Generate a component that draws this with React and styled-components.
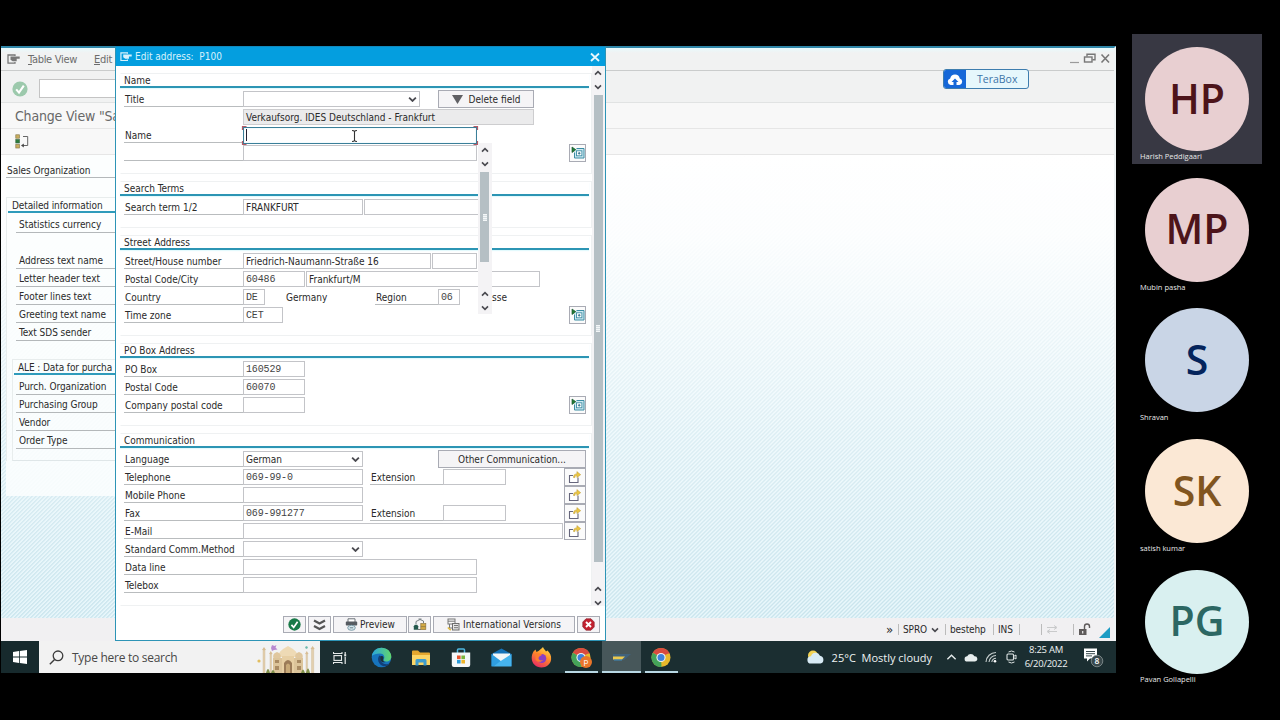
import React from "react";
import styled, { createGlobalStyle, css } from "styled-components";

const GlobalStyle = createGlobalStyle`
  * { box-sizing: border-box; }
  body {
    margin: 0;
    background: #000;
    overflow: hidden;
    font-family: "DejaVu Sans Condensed", "DejaVu Sans", Tahoma, sans-serif;
    font-stretch: condensed;
    font-size: 10px;
    color: #2a2a2a;
  }
  svg { display: block; flex: none; }
`;

/* ---------- icons ---------- */

const Chevron = ({ up, size = 8, color = "#4a4a50", w = 1.6 }) => (
  <svg width={size} height={size * 0.75} viewBox="0 0 8 6">
    <path d={up ? "M1 4.6 L4 1.6 L7 4.6" : "M1 1.4 L4 4.4 L7 1.4"} fill="none" stroke={color} strokeWidth={w} />
  </svg>
);

const HandIcon = ({ color, size = 13 }) => (
  <svg width={size} height={size * 0.77} viewBox="0 0 13 10">
    <path d="M8 8v1.2h-7v-8.2h7v1" fill="none" stroke={color} strokeWidth="1.3" />
    <path d="M3.5 2.6h9.2v2.2h-3v2.4h-4l-2.2-1.4z" fill={color} />
  </svg>
);

const CheckIcon = ({ size, color }) => (
  <svg width={size} height={size} viewBox="0 0 16 16">
    <circle cx="8" cy="8" r="7.6" fill={color} />
    <path d="M4.2 8.4l2.8 3.2 4.8-7" fill="none" stroke="#fff" strokeWidth="2.1" />
  </svg>
);

const MoreIcon = () => (
  <svg width="14" height="14" viewBox="0 0 14 14">
    <path d="M1 1v5.5l4-2.7z" fill="#1f7a34" stroke="#1f5a34" strokeWidth=".7" />
    <path d="M5.5 2.5h7.5v9.5h-9.5v-5.5" fill="#cfeaf2" stroke="#3b8da4" />
    <rect x="5.5" y="4.8" width="5.4" height="5" fill="#fff" stroke="#3b8da4" strokeWidth=".9" />
    <path d="M8.2 6v2.6M6.9 7.3h2.6" stroke="#2b6d84" strokeWidth=".9" />
  </svg>
);

const ArrowPageIcon = () => (
  <svg width="14" height="14" viewBox="0 0 14 14">
    <path d="M5 5.5h-3.5v7h8.500v-5" fill="#fff" stroke="#66667c" strokeWidth="1.1" />
    <path d="M5.5 7.500c0-2.600 1.200-3.600 3.400-3.600v-2.300l3.800 3.100-3.800 2.900v-2c-1.400 0-2 .5-2 2z" fill="#ecc63e" stroke="#b99732" strokeWidth=".5" />
  </svg>
);

const PrinterIcon = () => (
  <svg width="13" height="13" viewBox="0 0 13 13">
    <path d="M3 4v-3.2h7v3.2" fill="#fff" stroke="#6c7378" />
    <rect x=".8" y="3.6" width="11.4" height="4" rx=".8" fill="#565b61" />
    <ellipse cx="6.5" cy="9.8" rx="3.8" ry="2.5" fill="#d8e6ec" stroke="#7295a3" strokeWidth=".9" />
    <path d="M4.8 9.8h3.4" stroke="#65818c" />
  </svg>
);

const ScaleIcon = () => (
  <svg width="14" height="13" viewBox="0 0 14 13">
    <path d="M3 6v-2.5l4-2 3.5 1.5v2M5.5 1h3" fill="none" stroke="#6b7478" strokeWidth=".9" />
    <path d="M.8 11.8v-3.5l1-1.5h2.4l1 1.5v3.5z" fill="#24584d" />
    <path d="M5 11.5h3" fill="none" stroke="#777" />
    <rect x="7.8" y="5.6" width="5" height="6" fill="#d2a945" stroke="#8d7540" strokeWidth=".7" />
    <path d="M7.8 8.6h5" stroke="#8d7540" strokeWidth=".7" />
  </svg>
);

const VersionsIcon = () => (
  <svg width="13" height="13" viewBox="0 0 13 13">
    <rect x="1" y="1" width="7" height="5" fill="#f7f7f7" stroke="#777" />
    <path d="M1 3.2h7M2.5 6v4h3" fill="none" stroke="#777" />
    <rect x="5.5" y="5.5" width="6.5" height="6.5" fill="#e4e4e4" stroke="#6e6e6e" />
    <path d="M7 7.5h4M7 9.7h4" stroke="#777" />
    <path d="M.8 9.5l3 2.6" stroke="#dfb73b" strokeWidth="1.5" />
  </svg>
);

const CancelIcon = () => (
  <svg width="13" height="13" viewBox="0 0 13 13">
    <path d="M4 .8h5l3.2 3.2v5l-3.2 3.2h-5l-3.2-3.2v-5z" fill="#c2212f" stroke="#8e2530" strokeWidth=".7" />
    <path d="M4 4l5 5M9 4l-5 5" stroke="#fff" strokeWidth="1.9" />
  </svg>
);

const TableIcon = () => (
  <svg width="14" height="15" viewBox="0 0 14 15">
    <rect x=".8" y=".8" width="3.6" height="3.4" fill="#c9ae5d" stroke="#8c7c4c" strokeWidth=".7" />
    <rect x=".8" y="5.6" width="3.6" height="3.4" fill="#2c7c3b" stroke="#3b6b46" strokeWidth=".7" />
    <rect x=".8" y="10.6" width="3.6" height="3.4" fill="#c9ae5d" stroke="#8c7c4c" strokeWidth=".7" />
    <path d="M8 2.5h4.7v9h-5.4" fill="none" stroke="#666" />
    <path d="M6 11.5l2.8-2v4z" fill="#444" />
  </svg>
);

const TeraCloud = () => (
  <svg width="16" height="13" viewBox="0 0 16 13">
    <path d="M3.6 12a3.4 3.4 0 0 1-.4-6.6a4.9 4.9 0 0 1 9.6 0a3.4 3.4 0 0 1-.4 6.6h-2.9v-3h2l-3.5-3.6-3.5 3.6h2v3z" fill="#fff" />
    <path d="M8 9v4" stroke="#1668d8" strokeWidth="2" />
  </svg>
);

const WindowsLogo = () => (
  <svg width="14" height="14" viewBox="0 0 14 14">
    <path d="M0 2l6-.9v5.5h-6zM6.8 1l7.2-1v6.6h-7.2zM0 7.4h6v5.5l-6-.9zM6.8 7.4h7.2v6.6l-7.2-1z" fill="#fff" />
  </svg>
);

const SearchIcon = () => (
  <svg width="15" height="15" viewBox="0 0 15 15">
    <circle cx="9" cy="5.8" r="4.8" fill="none" stroke="#3c3c3c" strokeWidth="1.3" />
    <path d="M5.6 9.4l-4.8 4.8" stroke="#3c3c3c" strokeWidth="1.4" />
  </svg>
);

const TajMahal = () => (
  <svg width="64" height="32" viewBox="0 0 64 32">
    <path d="M7 9h2v23h-2zM14 13h1.6v19h-1.6zM50 13h1.6v19h-1.6zM55.5 8h2.2v24h-2.2z" fill="#e3cfae" stroke="#cdb894" strokeWidth=".4" />
    <path d="M6 9l2-3 2 3zM13 13l1.8-3 1.8 3zM49 13l1.8-3 1.8 3zM54.5 8l2.1-3 2.1 3z" fill="#d8bd94" />
    <path d="M17 17h30v15h-30z" fill="#dcc49a" />
    <path d="M24 16c-3-4 1-7 8-11c7 4 11 7 8 11z" fill="#eedab5" />
    <path d="M17.5 17c-1-3 .5-5 3.5-6c3 1 4.5 3 3.5 6zM39.5 17c-1-3 .5-5 3.5-6c3 1 4.5 3 3.5 6z" fill="#e0c79e" />
    <path d="M26 15h12v17h-12z" fill="#e7cfa4" />
    <path d="M28 32v-10q4-6 8 0v10z" fill="#9b7b58" />
    <path d="M30 32v-8q2-3 4 0v8z" fill="#c8a978" />
    <path d="M19 22v-3h4v3zM19 29v-4h4v4zM41 22v-3h4v3zM41 29v-4h4v4z" fill="#a98b63" />
    <path d="M10 32q2-8 4 0zM15 32q2-6 4 0zM45 32q2-7 4 0zM50 32q2-9 4 0z" fill="#81914c" />
    <path d="M16 4l2.5 1 2-1-1 2.5 2 2-3.5.5-2 1-1-3z" fill="#b98ad0" />
    <path d="M49 6l2-1 1 2-2 1z" fill="#6cb9ad" />
    <circle cx="3" cy="20" r="1.6" fill="#e2be60" />
  </svg>
);

const TaskViewIcon = () => (
  <svg width="14" height="14" viewBox="0 0 14 14">
    <path d="M.5 1v1.5h8.5v-1.5M.5 13v-1.5h8.5v1.5" fill="none" stroke="#e6eaea" strokeWidth="1.1" />
    <rect x="1" y="4.6" width="7.5" height="4.8" fill="none" stroke="#e6eaea" strokeWidth="1.1" />
    <path d="M12.2 1v2.5M12.2 6v7" stroke="#e6eaea" strokeWidth="1.2" />
    <rect x="11.2" y="3.2" width="2" height="2.2" fill="#e6eaea" />
  </svg>
);

const EdgeIcon = () => (
  <svg width="21" height="21" viewBox="0 0 21 21">
    <defs>
      <linearGradient id="edgeTop" x1="0" x2="1">
        <stop offset="0" stopColor="#2aa5dc" />
        <stop offset="1" stopColor="#62d66c" />
      </linearGradient>
    </defs>
    <circle cx="10.5" cy="10.5" r="9.8" fill="#1774bd" />
    <path d="M.8 9c.8-5 4.8-8.3 9.7-8.3c5.6 0 9.8 4 9.8 8.8c0 3-2.3 5-5 5c-2.2 0-3.3-1-2.6-2c1.6-2.3.3-6-3.8-6c-3.8 0-6.5 1-8.1 2.5z" fill="url(#edgeTop)" />
    <path d="M8.5 8.5c-3 3.2-1 9 3.5 10.5c3 .8 5.6-.8 6.8-2.5c-3.5 1.5-8 .5-9-3c-.4-1.6 0-3 .8-4z" fill="#123f78" />
    <path d="M10 9.3c1.6-1.2 3.2.6 2.3 2.6c-.6 1.6.6 3 2.2 3.2c-2.5.8-5.2-.8-5.2-3.2c0-1 .2-1.9.7-2.6z" fill="#1c3038" />
  </svg>
);

const FolderIcon = () => (
  <svg width="20" height="18" viewBox="0 0 20 18">
    <path d="M1 2.5q0-1 1-1h5l2 2h9q1 0 1 1v11h-18z" fill="#e4a72f" />
    <path d="M1 6h18v10h-18z" fill="#fbd566" />
    <path d="M4.5 16.5v-5q0-1.5 1.5-1.5h8q1.5 0 1.5 1.5v5h-3v-3h-5v3z" fill="#3f9dce" />
  </svg>
);

const StoreIcon = () => (
  <svg width="20" height="20" viewBox="0 0 20 20">
    <path d="M6.5 5v-3q0-1 1-1h5q1 0 1 1v3" fill="none" stroke="#4fb6de" strokeWidth="1.5" />
    <path d="M.8 4.5h18.4v12.5q0 2-2 2h-14.4q-2 0-2-2z" fill="#f5f7f8" />
    <path d="M6 7.5h3.6v3.6h-3.6z" fill="#e9542d" />
    <path d="M10.4 7.5h3.6v3.6h-3.6z" fill="#7db53c" />
    <path d="M6 11.9h3.6v3.6h-3.6z" fill="#2c9bd9" />
    <path d="M10.4 11.9h3.6v3.6h-3.6z" fill="#f0b429" />
  </svg>
);

const MailIcon = () => (
  <svg width="21" height="19" viewBox="0 0 21 19">
    <path d="M.5 6l10-5.5 10 5.5v12h-20z" fill="#1572b8" />
    <path d="M2 5.5h17v6l-8.5 4-8.5-4z" fill="#f2f6f8" />
    <path d="M.5 6l10 7.5-8.5 5h-1.5z" fill="#2f9ee0" />
    <path d="M20.5 6l-10 6.5-8.5 6h18.5z" fill="#46b4ee" />
  </svg>
);

const FirefoxIcon = () => (
  <svg width="21" height="21" viewBox="0 0 21 21">
    <defs>
      <linearGradient id="fox" x1=".8" y1="0" x2=".3" y2="1">
        <stop offset="0" stopColor="#ffe14a" />
        <stop offset=".45" stopColor="#ff8a2a" />
        <stop offset="1" stopColor="#ea2a62" />
      </linearGradient>
    </defs>
    <path d="M2.5 4.5l2-2 1 2.5 2-1c1-.8 3-2.5 4.5-4c.5 2 2 2.5 3 4.5l1.5-1c2.5 2.5 4 5 3.6 9c-.5 4.5-4.6 8-9.6 8c-5.5 0-9.8-4-9.8-9.5c0-2.5.7-4.5 1.8-6.5z" fill="url(#fox)" />
    <circle cx="10.8" cy="11.5" r="4.5" fill="#8a3ec4" />
    <path d="M4.5 6c2 1 4-.5 6.5 1.5c-1 1.5-3 1.5-3.5 3.5c0 2 2 3 4.5 2c-1.5 2.5-6 2.5-7.5-.5z" fill="#ff7d2c" />
  </svg>
);

const ChromeIcon = ({ badge }) => (
  <svg width="22" height="22" viewBox="0 0 22 22">
    <circle cx="10" cy="10.5" r="9.5" fill="#e8b92c" />
    <path d="M10 10.5L1.8 5.7a9.5 9.5 0 0 1 16.4 0z" fill="#d94b3f" />
    <path d="M1.8 5.7L10 10.5l.5 9.5a9.5 9.5 0 0 1-8.7-14.3z" fill="#44a35a" />
    <path d="M10 6h8.4" stroke="#d94b3f" strokeWidth="1" />
    <circle cx="10" cy="10.5" r="4.6" fill="#f4f4f2" />
    <circle cx="10" cy="10.5" r="3.5" fill="#3f82dc" />
    {badge && <circle cx="15" cy="15" r="6" fill="#e8752a" />}
    {badge && (
      <text x="15" y="17.4" textAnchor="middle" fontSize="8" fill="#fff" fontFamily="Open Sans, sans-serif">
        p
      </text>
    )}
  </svg>
);

const SapIcon = () => (
  <svg width="22" height="12" viewBox="0 0 22 12">
    <path d="M2 2h18l-7 6h-11z" fill="#40627c" />
    <path d="M2 4.5h12l-3 3h-9z" fill="#ecc94e" />
    <path d="M3 8h8" stroke="#3f8bc0" strokeWidth="1" />
  </svg>
);

const WeatherIcon = () => (
  <svg width="18" height="14" viewBox="0 0 18 14">
    <circle cx="6" cy="5.5" r="5" fill="#f2d254" />
    <path d="M4 13.5a3.6 3.6 0 0 1 0-7.2a4.8 4.8 0 0 1 9-.6a4 4 0 0 1 .5 7.8z" fill="#d8ebf5" />
  </svg>
);

const CloudIcon = () => (
  <svg width="14" height="9" viewBox="0 0 14 9">
    <path d="M3.2 8.5a2.6 2.6 0 0 1 0-5.2a4 4 0 0 1 7.2 0a2.6 2.6 0 0 1 .6 5.2z" fill="#e8eeee" />
  </svg>
);

const WifiIcon = () => (
  <svg width="12" height="12" viewBox="0 0 12 12">
    <path d="M1 11a10 10 0 0 1 10-9.5M4 11a7 7 0 0 1 7-6.5M6.8 11a4.4 4.4 0 0 1 4.2-3.8" fill="none" stroke="#c6cece" strokeWidth="1.1" />
    <circle cx="10" cy="10.3" r="1.3" fill="#fff" />
  </svg>
);

const MeetNowIcon = () => (
  <svg width="11" height="14" viewBox="0 0 11 14">
    <path d="M2.5 2q3-2 6 0M2.5 12q3 2 6 0" fill="none" stroke="#dde3e3" />
    <rect x="1" y="4" width="6.5" height="6" rx="1" fill="none" stroke="#dde3e3" strokeWidth="1.1" />
    <path d="M7.5 6.5l2.5-1.5v4l-2.5-1.5" fill="none" stroke="#dde3e3" />
  </svg>
);

const NotificationIcon = () => (
  <svg width="21" height="21" viewBox="0 0 21 21">
    <path d="M1 1.5h13v10h-7l-3 3v-3h-3z" fill="#fff" />
    <path d="M3 4.5h9M3 6.7h9M3 8.9h6" stroke="#22363a" strokeWidth=".9" />
    <circle cx="14" cy="14" r="5.8" fill="#3a494c" stroke="#8a9697" strokeWidth=".8" />
    <text x="14" y="17.1" textAnchor="middle" fontSize="8.5" fontWeight="600" fill="#fff" fontFamily="Open Sans, sans-serif">
      8
    </text>
  </svg>
);

const LockIcon = () => (
  <svg width="13" height="13" viewBox="0 0 13 13">
    <rect x="1" y="6" width="7.5" height="6" fill="#5e5a5a" />
    <path d="M6.5 6v-2.5a2.5 2.5 0 0 1 5 0v1.5" fill="none" stroke="#5e5a5a" strokeWidth="1.4" />
    <path d="M4.7 8v2.5" stroke="#eee" strokeWidth="1.2" />
  </svg>
);

const WindowButtons = () => (
  <svg width="42" height="12" viewBox="0 0 42 12">
    <path d="M1 9.5h9" stroke="#9b9b9b" strokeWidth="1.2" />
    <rect x="15.5" y="4" width="7.5" height="5" fill="none" stroke="#777" strokeWidth="1.4" />
    <path d="M18 3.5v-2.3h8v5.5h-2.5" fill="none" stroke="#777" strokeWidth="1.4" />
    <path d="M32.5 1.5l7.5 8M40 1.5l-7.5 8" stroke="#777" strokeWidth="1.6" />
  </svg>
);

/* ---------- page ---------- */

const Page = styled.div`
  width: 1280px;
  height: 720px;
  display: flex;
  background: #000;
`;

const Desktop = styled.div`
  position: relative;
  width: 1115px;
  height: 627px;
  margin: 46px 0 0 1px;
  display: flex;
  flex-direction: column;
`;

const SapWindow = styled.div`
  height: 595px;
  display: flex;
  flex-direction: column;
  border-top: 2px solid #2f86a8;
  border-right: 2px solid #eef3f4;
  background: #f1f2f2;
`;

const MenuBar = styled.div`
  height: 23px;
  padding: 0 3px 0 6px;
  display: flex;
  align-items: center;
  border-bottom: 1px solid #cacccc;
  color: #6c6c6c;
  font-size: 11px;
  background: linear-gradient(#e8fafd, #f1f2f2 5px);
`;

const MenuItem = styled.span`
  margin-left: ${(p) => p.$left}px;
  letter-spacing: -0.3px;
  &::first-letter { text-decoration: underline; }
`;

const PushRight = styled.div`
  margin-left: auto;
`;

const CommandBar = styled.div`
  height: 32px;
  padding: 4px 0 0 11px;
  display: flex;
  align-items: center;
  gap: 11px;
  border-bottom: 1px solid #e1e3e3;
`;

const CommandField = styled.div`
  width: 130px;
  height: 19px;
  background: #fff;
  border: 1px solid #c4c4c4;
`;

const ViewTitle = styled.div`
  height: 26px;
  padding-left: 14px;
  line-height: 26px;
  font-size: 14px;
  color: #686868;
  letter-spacing: -0.18px;
  background: #f8f8f8;
  border-bottom: 1px solid #e6e6e6;
  white-space: nowrap;
`;

const AppToolbar = styled.div`
  height: 26px;
  padding-left: 14px;
  display: flex;
  align-items: center;
  background: #f8f8f8;
  border-bottom: 1px solid #e6e6e6;
`;

const Canvas = styled.div`
  flex: 1;
  padding-left: 5px;
  background:
    linear-gradient(#fff 0, rgba(255, 255, 255, 0.93) 80px, rgba(255, 255, 255, 0.4) 280px, rgba(255, 255, 255, 0.1) 100%),
    repeating-linear-gradient(135deg, #bfdfe9 0, #e6f6fb 1.5px, #e6f6fb 1.9px, #bfdfe9 2.83px);
`;

const ViewPanel = styled.div`
  width: 109px;
  height: 341px;
  padding-top: 6px;
  overflow: hidden;
  white-space: nowrap;
  background: rgba(252, 254, 254, 0.86);
`;

const PanelLabel = styled.div`
  height: 17px;
  margin-left: ${(p) => p.$indent}px;
  padding-left: ${(p) => p.$pad || 3}px;
  line-height: ${(p) => p.$line || 18}px;
  border-bottom: 1px solid #b4b8ba;
  letter-spacing: -0.05px;
  margin-bottom: ${(p) => p.$gap || 1}px;
`;

const PanelBox = styled.div`
  margin-left: ${(p) => p.$indent}px;
  border-left: 1px solid #e8eded;
  border-top: 1px solid #e8eded;
  ${(p) =>
    p.$end &&
    css`
      border-bottom: 1px solid #dfe6e8;
      height: 102px;
    `}
`;

const PanelHeading = styled.div`
  height: 15px;
  margin-left: 1px;
  padding-left: 4px;
  line-height: 15px;
  border-bottom: 2px solid #2f9bbb;
  letter-spacing: -0.1px;
  margin-bottom: 3px;
`;

const StatusBar = styled.div`
  height: 23px;
  padding-right: 4px;
  display: flex;
  align-items: center;
  justify-content: flex-end;
  background: #f1f0f2;
`;

const StatusText = styled.span`
  display: flex;
  align-items: center;
  gap: 4px;
  height: 11px;
  line-height: 11px;
  padding: 0 5px 0 4px;
  width: ${(p) => p.$w}px;
  white-space: nowrap;
  letter-spacing: -0.1px;
  border-left: 1px solid ${(p) => (p.$bare ? "transparent" : "#bbb")};
  ${(p) =>
    p.$bare &&
    css`
      font-size: 13px;
    `}
`;

const TeraBox = styled.div`
  position: absolute;
  left: 942px;
  top: 23px;
  width: 86px;
  height: 20px;
  display: flex;
  border: 1px solid #3e7dae;
  border-radius: 3px;
  overflow: hidden;
  background: #e6f7fc;
  color: #3c74a8;
  font: 10.5px/18px "Open Sans", sans-serif;
`;

const TeraLogo = styled.div`
  width: 22px;
  margin-right: 11px;
  display: flex;
  align-items: center;
  justify-content: center;
  background: #1668d8;
`;

/* ---------- dialog ---------- */

const Dialog = styled.div`
  position: absolute;
  left: 114px;
  top: 0;
  width: 491px;
  height: 595px;
  display: flex;
  flex-direction: column;
  background: #fff;
  border: 1px solid #2d94b6;
  border-top: 1px solid #1289bd;
`;

const DialogTitle = styled.div`
  height: 19px;
  padding: 0 5px 0 4px;
  display: flex;
  align-items: center;
  gap: 3px;
  background: #049edf;
  color: #d8f2fc;
  font-size: 10px;
  white-space: pre;
`;

const DialogBody = styled.div`
  position: relative;
  height: 540px;
  display: flex;
`;

const Form = styled.div`
  width: 472px;
  margin-left: 4px;
  padding-top: 7px;
`;

const Group = styled.div`
  height: ${(p) => 29 + p.$rows * 18}px;
  margin-bottom: 7px;
  border: 1px solid #eff1f2;
  border-left-color: transparent;
`;

const GroupTitle = styled.div`
  width: 469px;
  height: 14px;
  margin: 0 0 2px -1px;
  padding-left: 4px;
  line-height: 13px;
  border-bottom: 2px solid #2c95b4;
  box-shadow: 0 1px 1px #e3fafd;
`;

const Row = styled.div`
  position: relative;
  height: 18px;
  display: flex;
  align-items: center;
  padding-left: 3px;
`;

const Label = styled.div`
  width: ${(p) => p.$w || 119}px;
  height: 16px;
  margin-left: ${(p) => p.$left || 0}px;
  padding-left: 1px;
  line-height: 17px;
  white-space: nowrap;
  border-bottom: 1px solid ${(p) => (p.$plain ? "transparent" : "#b9bcbe")};
`;

const Field = styled.div`
  width: ${(p) => p.$w}px;
  height: 16px;
  margin-left: ${(p) => p.$left || 0}px;
  padding: 0 2px;
  display: flex;
  align-items: center;
  justify-content: space-between;
  border: 1px solid #c3c4c8;
  background: #fff;
  line-height: 13px;
  white-space: nowrap;
  ${(p) =>
    p.$mono &&
    css`
      color: #444;
      font: 10px "Liberation Mono", monospace;
      letter-spacing: -0.15px;
    `}
`;

const FocusField = styled(Field)`
  position: relative;
  height: 17px;
  border-color: #3b7f99;
  box-shadow: inset 0 0 1px #8fd6ea;
`;

const Caret = styled.div`
  width: 1px;
  height: 12px;
  background: #223;
`;

const Corners = styled.svg`
  position: absolute;
  left: -3px;
  top: -3px;
`;

const IBeam = styled.svg`
  position: absolute;
  left: 106px;
  top: 1px;
`;

const Hint = styled.div`
  width: 291px;
  height: 16px;
  margin-left: 119px;
  padding-left: 2px;
  line-height: 15px;
  background: #ebebec;
  border: 1px solid #cdcdcf;
`;

const Button = styled.div`
  width: ${(p) => p.$w}px;
  height: ${(p) => p.$h || 18}px;
  margin-left: ${(p) => p.$left || 0}px;
  display: flex;
  align-items: center;
  justify-content: center;
  gap: ${(p) => p.$gap || 3}px;
  border: 1px solid #a9abb4;
  background: #f5f4f6;
  white-space: nowrap;
`;

const SideButton = styled(Button)`
  margin-left: auto;
  margin-right: 5px;
  background: #fbfbfb;
`;

const Scrollbar = styled.div`
  width: ${(p) => p.$w}px;
  height: 100%;
  display: flex;
  flex-direction: column;
  align-items: center;
  background: #f4f3f5;
  padding: ${(p) => p.$pad};
`;

const ScrollArrows = styled.div`
  height: 20px;
  display: flex;
  flex-direction: column;
  justify-content: space-between;
`;

const Thumb = styled.div`
  width: 9px;
  height: ${(p) => p.$h}px;
  margin: 5px 0 auto;
  display: flex;
  align-items: center;
  justify-content: center;
  background: #b5bfc4;
`;

const Grip = styled.div`
  width: 4px;
  height: 7px;
  background: repeating-linear-gradient(#f4f7f8 0 1px, #d6dee2 1px 2px);
`;

const ListScroll = styled.div`
  position: absolute;
  left: 362px;
  top: 77px;
  width: 14px;
  height: 171px;
`;

const Footer = styled.div`
  height: 33px;
  padding: 10px 5px 0 0;
  display: flex;
  justify-content: flex-end;
  gap: 2px;
`;

const PreviewButton = styled(Button)`
  margin-right: -1px;
`;

/* ---------- taskbar ---------- */

const Taskbar = styled.div`
  height: 32px;
  display: flex;
  align-items: stretch;
  background: #1b2e31;
  font-family: "Open Sans", "Noto Sans", sans-serif;
  font-stretch: normal;
  color: #eef3f3;
`;

const StartButton = styled.div`
  width: 38px;
  display: flex;
  align-items: center;
  justify-content: center;
  background: #172a2d;
`;

const SearchBox = styled.div`
  width: 281px;
  padding-left: 10px;
  display: flex;
  align-items: center;
  gap: 8px;
  background: #f2f2f2;
  color: #484848;
  font-size: 12px;
  letter-spacing: -0.27px;
`;

const TaskIcon = styled.div`
  width: ${(p) => p.$w}px;
  margin-left: ${(p) => p.$left || 0}px;
  padding-top: 3px;
  display: flex;
  align-items: center;
  justify-content: center;
  border-bottom: 2px solid ${(p) => (p.$open ? "#b9d8e4" : "transparent")};
  background: ${(p) => (p.$active ? "#47575a" : "none")};
`;

const Tray = styled.div`
  margin-left: auto;
  padding-right: 12px;
  display: flex;
  align-items: center;
`;

const Weather = styled.div`
  display: flex;
  align-items: center;
  gap: 7px;
  margin-right: 9px;
  font-size: 11px;
  white-space: pre;
`;

const TrayItem = styled.div`
  width: 20px;
  display: flex;
  justify-content: center;
`;

const Clock = styled.div`
  width: 50px;
  margin-right: 12px;
  text-align: center;
  font-size: 9.5px;
  line-height: 14.5px;
  letter-spacing: -0.25px;
`;

/* ---------- participants ---------- */

const Participants = styled.div`
  width: 130px;
  margin: 34px 0 0 16px;
  display: flex;
  flex-direction: column;
  gap: 1px;
  font-family: "Open Sans", "Noto Sans", sans-serif;
  font-stretch: normal;
`;

const Tile = styled.div`
  height: 129.7px;
  padding-top: 13px;
  background: ${(p) => (p.$speaking ? "#383843" : "#000")};
`;

const Avatar = styled.div`
  width: 104px;
  height: 104px;
  margin: 0 auto;
  padding-bottom: 3px;
  display: flex;
  align-items: center;
  justify-content: center;
  border-radius: 50%;
  background: ${(p) => p.$bg};
  color: ${(p) => p.$color};
  font-size: 41px;
  font-weight: 600;
`;

const PersonName = styled.div`
  padding-left: 8px;
  line-height: 10px;
  font-size: 7.5px;
  color: #e8e8e8;
`;

const people = [
  { initials: "HP", name: "Harish Peddigaari", bg: "#e8cfd1", color: "#4d141a", speaking: true },
  { initials: "MP", name: "Mubin pasha", bg: "#e8cfd1", color: "#4d141a" },
  { initials: "S", name: "Shravan", bg: "#c9d5e6", color: "#04245c" },
  { initials: "SK", name: "satish kumar", bg: "#fbe8d5", color: "#81551f" },
  { initials: "PG", name: "Pavan Gollapelli", bg: "#d9f0f0", color: "#2c6763" },
];

const Arrows = () => (
  <ScrollArrows>
    <Chevron up />
    <Chevron />
  </ScrollArrows>
);

const Select = ({ w, children }) => (
  <Field $w={w}>
    <span>{children}</span>
    <Chevron size={9} />
  </Field>
);

const More = () => (
  <SideButton $w={17}>
    <MoreIcon />
  </SideButton>
);

const Open = () => (
  <SideButton $w={22}>
    <ArrowPageIcon />
  </SideButton>
);

function AddressForm() {
  return (
    <Form>
      <Group $rows={4}>
        <GroupTitle>Name</GroupTitle>
        <Row>
          <Label>Title</Label>
          <Select w={177} />
          <Button $w={96} $left={18} $gap={6}>
            <svg width="11" height="9" viewBox="0 0 11 9">
              <path d="M0 0h11l-5.5 9z" fill="#606064" />
            </svg>
            Delete field
          </Button>
        </Row>
        <Row>
          <Hint>Verkaufsorg. IDES Deutschland - Frankfurt</Hint>
        </Row>
        <Row>
          <Label>Name</Label>
          <FocusField $w={234}>
            <Caret />
            <Corners width="238" height="21" viewBox="0 0 238 21">
              <path d="M1.5 5v-3.5h4M232.5 1.5h4v3.5M1.5 16v3.5h4M232.5 19.5h4v-3.5" fill="none" stroke="#b45a66" strokeWidth="1.2" />
            </Corners>
            <IBeam width="9" height="14" viewBox="0 0 9 14">
              <path d="M2 1.5q2 0 2.5 1q.5-1 2.5-1M2 12.5q2 0 2.5-1q.5 1 2.5 1M4.500 2v10" fill="none" stroke="#333" strokeWidth="1.1" />
            </IBeam>
          </FocusField>
        </Row>
        <Row>
          <Label />
          <Field $w={234} />
          <More />
        </Row>
      </Group>

      <Group $rows={1}>
        <GroupTitle>Search Terms</GroupTitle>
        <Row>
          <Label>Search term 1/2</Label>
          <Field $w={120}>FRANKFURT</Field>
          <Field $w={125} $left={1} />
        </Row>
      </Group>

      <Group $rows={4}>
        <GroupTitle>Street Address</GroupTitle>
        <Row>
          <Label>Street/House number</Label>
          <Field $w={188}>Friedrich-Naumann-Straße 16</Field>
          <Field $w={45} $left={1} />
        </Row>
        <Row>
          <Label>Postal Code/City</Label>
          <Field $w={62} $mono>60486</Field>
          <Field $w={234} $left={1}>Frankfurt/M</Field>
        </Row>
        <Row>
          <Label>Country</Label>
          <Field $w={22} $mono>DE</Field>
          <Label $w={71} $left={20} $plain>Germany</Label>
          <Label $w={63} $left={19}>Region</Label>
          <Field $w={22} $mono>06</Field>
          <Label $w={40} $left={31} $plain>sse</Label>
        </Row>
        <Row>
          <Label>Time zone</Label>
          <Field $w={40} $mono>CET</Field>
          <More />
        </Row>
      </Group>

      <Group $rows={3}>
        <GroupTitle>PO Box Address</GroupTitle>
        <Row>
          <Label>PO Box</Label>
          <Field $w={62} $mono>160529</Field>
        </Row>
        <Row>
          <Label>Postal Code</Label>
          <Field $w={62} $mono>60070</Field>
        </Row>
        <Row>
          <Label>Company postal code</Label>
          <Field $w={62} />
          <More />
        </Row>
      </Group>

      <Group $rows={8}>
        <GroupTitle>Communication</GroupTitle>
        <Row>
          <Label>Language</Label>
          <Select w={120}>German</Select>
          <Button $w={148} $left={75}>Other Communication...</Button>
        </Row>
        <Row>
          <Label>Telephone</Label>
          <Field $w={120} $mono>069-99-0</Field>
          <Label $w={73} $left={7}>Extension</Label>
          <Field $w={63} />
          <Open />
        </Row>
        <Row>
          <Label>Mobile Phone</Label>
          <Field $w={120} />
          <Open />
        </Row>
        <Row>
          <Label>Fax</Label>
          <Field $w={120} $mono>069-991277</Field>
          <Label $w={73} $left={7}>Extension</Label>
          <Field $w={63} />
          <Open />
        </Row>
        <Row>
          <Label>E-Mail</Label>
          <Field $w={320} />
          <Open />
        </Row>
        <Row>
          <Label>Standard Comm.Method</Label>
          <Select w={120} />
        </Row>
        <Row>
          <Label>Data line</Label>
          <Field $w={234} />
        </Row>
        <Row>
          <Label>Telebox</Label>
          <Field $w={234} />
        </Row>
      </Group>
    </Form>
  );
}

function AddressDialog() {
  return (
    <Dialog>
      <DialogTitle>
        <HandIcon color="#d8f2fc" size={12} />
        {"Edit address:  P100"}
        <PushRight>
          <svg width="10" height="10" viewBox="0 0 10 10">
            <path d="M1 1.5l8 7.5M9 1.5l-8 7.5" stroke="#e6f7fd" strokeWidth="1.8" />
          </svg>
        </PushRight>
      </DialogTitle>
      <DialogBody>
        <AddressForm />
        <Scrollbar $w={13} $pad="4px 3px 0 2px">
          <Arrows />
          <Thumb $h={467}>
            <Grip />
          </Thumb>
          <Arrows />
        </Scrollbar>
        <ListScroll>
          <Scrollbar $w={14} $pad="4px 1px 3px 0">
            <Arrows />
            <Thumb $h={90}>
              <Grip />
            </Thumb>
            <Arrows />
          </Scrollbar>
        </ListScroll>
      </DialogBody>
      <Footer>
        <Button $w={23} $h={17}>
          <CheckIcon size={13} color="#197a48" />
        </Button>
        <Button $w={23} $h={17}>
          <svg width="13" height="12" viewBox="0 0 13 12">
            <path d="M1 1.5l5.5 3 5.5-3M1 7l5.5 3 5.5-3" fill="none" stroke="#555" strokeWidth="2.2" />
          </svg>
        </Button>
        <PreviewButton $w={74} $h={17} $gap={2}>
          <PrinterIcon />
          Preview
        </PreviewButton>
        <Button $w={23} $h={17}>
          <ScaleIcon />
        </Button>
        <Button $w={142} $h={17}>
          <VersionsIcon />
          International Versions
        </Button>
        <Button $w={23} $h={17}>
          <CancelIcon />
        </Button>
      </Footer>
    </Dialog>
  );
}

function TableView() {
  return (
    <SapWindow>
      <MenuBar>
        <HandIcon color="#777" />
        <MenuItem $left={8}>Table View</MenuItem>
        <MenuItem $left={17}>Edit</MenuItem>
        <PushRight>
          <WindowButtons />
        </PushRight>
      </MenuBar>
      <CommandBar>
        <CheckIcon size={16} color="#9cc9ac" />
        <CommandField />
      </CommandBar>
      <ViewTitle>Change View "Sa</ViewTitle>
      <AppToolbar>
        <TableIcon />
      </AppToolbar>
      <Canvas>
        <ViewPanel>
          <PanelLabel $indent={0} $pad={1} $gap={19} $line={20}>Sales Organization</PanelLabel>
          <PanelBox $indent={0}>
            <PanelHeading>Detailed information</PanelHeading>
            <PanelLabel $indent={9} $gap={19}>Statistics currency</PanelLabel>
            <PanelLabel $indent={9}>Address text name</PanelLabel>
            <PanelLabel $indent={9}>Letter header text</PanelLabel>
            <PanelLabel $indent={9}>Footer lines text</PanelLabel>
            <PanelLabel $indent={9}>Greeting text name</PanelLabel>
            <PanelLabel $indent={9} $gap={18}>Text SDS sender</PanelLabel>
            <PanelBox $indent={5} $end>
              <PanelHeading>ALE : Data for purcha</PanelHeading>
              <PanelLabel $indent={3}>Purch. Organization</PanelLabel>
              <PanelLabel $indent={3}>Purchasing Group</PanelLabel>
              <PanelLabel $indent={3}>Vendor</PanelLabel>
              <PanelLabel $indent={3}>Order Type</PanelLabel>
            </PanelBox>
          </PanelBox>
        </ViewPanel>
      </Canvas>
      <StatusBar>
        <StatusText $w={17} $bare>»</StatusText>
        <StatusText $w={47}>SPRO <Chevron /></StatusText>
        <StatusText $w={48}>bestehp</StatusText>
        <StatusText $w={26}>INS</StatusText>
        <StatusText $w={22} />
        <StatusText $w={32}>
          <svg width="12" height="9" viewBox="0 0 12 9">
            <path d="M1 2.5h9M8 .5l3 2-3 2M11 6.5h-9M4 4.5l-3 2 3 2" fill="none" stroke="#c9cacb" />
          </svg>
        </StatusText>
        <StatusText $w={26}>
          <LockIcon />
        </StatusText>
        <svg width="11" height="16" viewBox="0 0 11 16">
          <path d="M11 5v11h-11z" fill="#1d9cc4" />
        </svg>
      </StatusBar>
    </SapWindow>
  );
}

export default function App() {
  return (
    <Page>
      <GlobalStyle />
      <Desktop>
        <TableView />
        <TeraBox>
          <TeraLogo>
            <TeraCloud />
          </TeraLogo>
          TeraBox
        </TeraBox>
        <AddressDialog />
        <Taskbar>
          <StartButton>
            <WindowsLogo />
          </StartButton>
          <SearchBox>
            <SearchIcon />
            Type here to search
            <PushRight>
              <TajMahal />
            </PushRight>
          </SearchBox>
          <TaskIcon $w={40}><TaskViewIcon /></TaskIcon>
          <TaskIcon $w={42}><EdgeIcon /></TaskIcon>
          <TaskIcon $w={38}><FolderIcon /></TaskIcon>
          <TaskIcon $w={42}><StoreIcon /></TaskIcon>
          <TaskIcon $w={39}><MailIcon /></TaskIcon>
          <TaskIcon $w={41}><FirefoxIcon /></TaskIcon>
          <TaskIcon $w={33} $left={3} $open><ChromeIcon badge /></TaskIcon>
          <TaskIcon $w={39} $left={4} $open $active><SapIcon /></TaskIcon>
          <TaskIcon $w={33} $left={4} $open><ChromeIcon /></TaskIcon>
          <Tray>
            <Weather>
              <WeatherIcon />
              {"25°C  Mostly cloudy"}
            </Weather>
            <TrayItem><Chevron up size={11} color="#e6ecec" w={1} /></TrayItem>
            <TrayItem><CloudIcon /></TrayItem>
            <TrayItem><WifiIcon /></TrayItem>
            <TrayItem><MeetNowIcon /></TrayItem>
            <Clock>
              8:25 AM
              <br />
              6/20/2022
            </Clock>
            <NotificationIcon />
          </Tray>
        </Taskbar>
      </Desktop>
      <Participants>
        {people.map((p) => (
          <Tile key={p.name} $speaking={p.speaking}>
            <Avatar $bg={p.bg} $color={p.color}>{p.initials}</Avatar>
            <PersonName>{p.name}</PersonName>
          </Tile>
        ))}
      </Participants>
    </Page>
  );
}
